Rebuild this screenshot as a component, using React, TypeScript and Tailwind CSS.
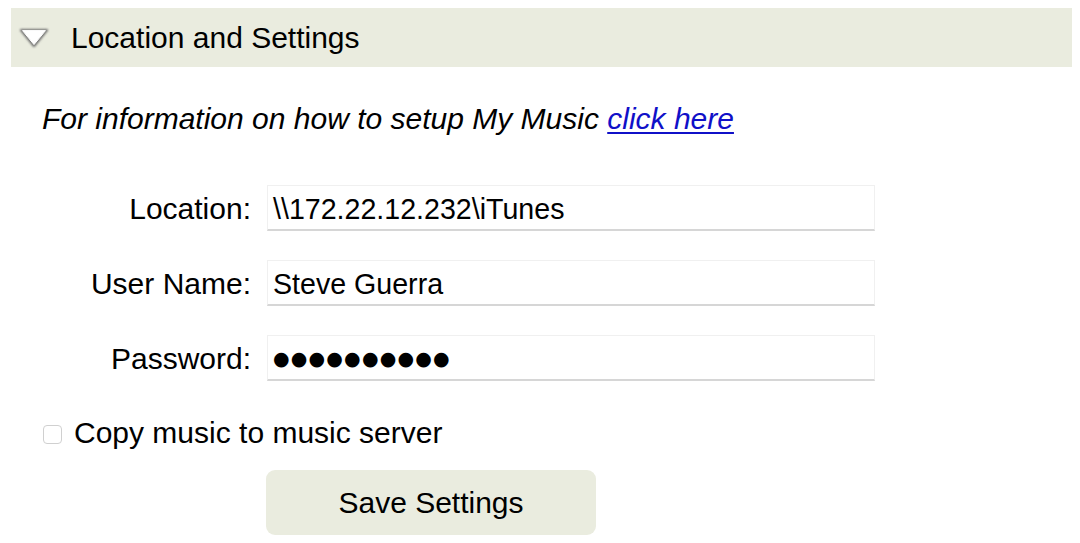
import React from "react";

function Disclosure() {
  return (
    <svg width="32" height="22" viewBox="0 0 32 22" className="shrink-0">
      <defs>
        <filter id="tri-blur" x="-30%" y="-30%" width="160%" height="160%">
          <feGaussianBlur stdDeviation="1.1" />
        </filter>
      </defs>
      <path d="M3 3 L29 3 L16 19 Z" fill="#6f6f6f" stroke="#6f6f6f" strokeWidth="2.2" strokeLinejoin="round" filter="url(#tri-blur)" />
      <path d="M4.5 3.6 L27.5 3.6 L16 17.6 Z" fill="#ffffff" stroke="#ffffff" strokeWidth="1" strokeLinejoin="round" />
    </svg>
  );
}

type FieldProps = {
  label: string;
  children: React.ReactNode;
};

function Field({ label, children }: FieldProps) {
  return (
    <div className="flex items-center">
      <label className="w-[252px] text-right pr-[1px] pt-[2px]">{label}</label>
      <div className="ml-[15px] w-[608px] h-[46px] flex items-center pl-[5px] pt-[4px] border border-[#f0f0f0] border-b-2 border-b-[#d6d6d6] bg-white text-[28.6px]">
        {children}
      </div>
    </div>
  );
}

export default function App() {
  return (
    <div
      className="w-[1080px] h-[543px] bg-white text-black text-[30px] leading-none overflow-hidden"
      style={{ fontFamily: '"Liberation Sans", Arial, sans-serif' }}
    >
      <div className="mt-2 ml-[11px] mr-2 h-[59px] bg-[#eaecdf] flex items-center">
        <div className="ml-[7px] mt-[1px]">
          <Disclosure />
        </div>
        <h2 className="ml-[21px] font-normal">Location and Settings</h2>
      </div>

      <p className="mt-[36px] ml-[42px] italic h-[32px] leading-[32px]">
        For information on how to setup My Music{" "}
        <a href="#" className="text-[#1010c8] underline underline-offset-[3px] decoration-[2px]">
          click here
        </a>
      </p>

      <div className="mt-[50px] flex flex-col gap-[29px]">
        <Field label="Location:">
          <span>\\172.22.12.232\iTunes</span>
        </Field>
        <Field label="User Name:">
          <span>Steve Guerra</span>
        </Field>
        <Field label="Password:">
          <span
            className="text-[19px] tracking-[1.2px] -mt-[2px]"
            style={{ fontFamily: '"DejaVu Sans", sans-serif' }}
          >
            ●●●●●●●●●●
          </span>
        </Field>
      </div>

      <div className="mt-[37px] ml-[43px] flex items-center">
        <span className="w-[19px] h-[19px] rounded-[4px] border border-[#d0d0d0] bg-white mt-[2px]" />
        <span className="ml-[12px]">Copy music to music server</span>
      </div>

      <button className="mt-[22px] ml-[266px] w-[330px] h-[65px] rounded-[9px] bg-[#eaecdf] text-[30px] text-black flex items-center justify-center">
        Save Settings
      </button>
    </div>
  );
}
